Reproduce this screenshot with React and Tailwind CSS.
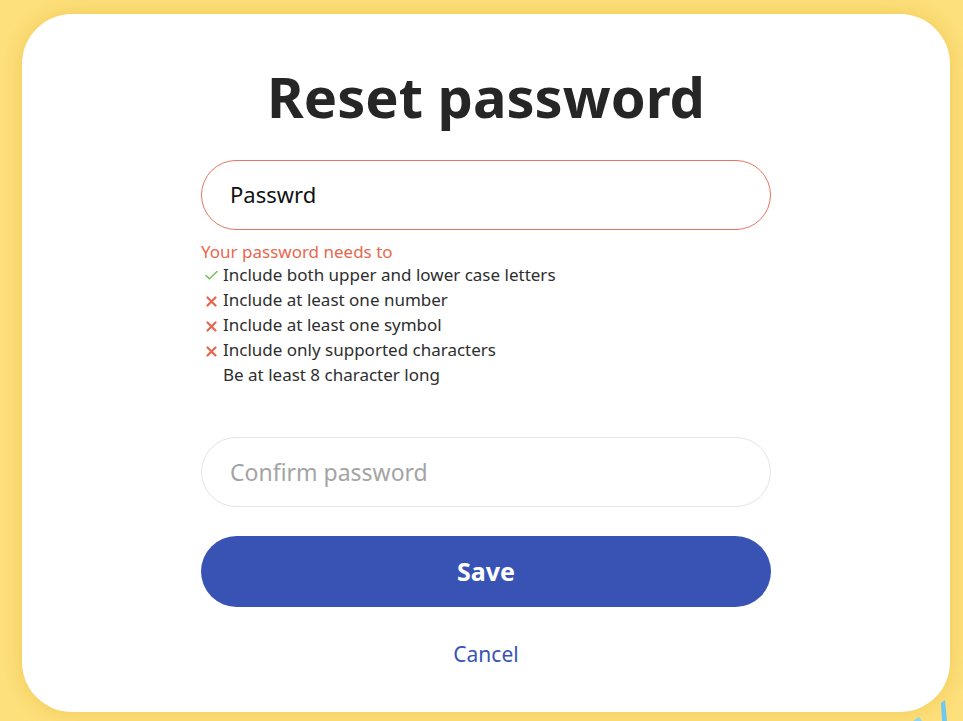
import { useState } from "react"

const RULES = [
  { text: "Include both upper and lower case letters", state: "ok" },
  { text: "Include at least one number", state: "fail" },
  { text: "Include at least one symbol", state: "fail" },
  { text: "Include only supported characters", state: "fail" },
  { text: "Be at least 8 character long", state: "none" },
]

function RuleIcon({ state }) {
  if (state === "ok") {
    return (
      <svg width="13" height="10" viewBox="0 0 13 10" className="mt-[3px]">
        <path d="M1 5.5 L4.5 8.8 L12 1.5" fill="none" stroke="#7dbf5c" strokeWidth="1.6" strokeLinecap="round" strokeLinejoin="round" />
      </svg>
    )
  }
  if (state === "fail") {
    return (
      <svg width="11" height="11" viewBox="0 0 11 11" className="mt-[4px]">
        <path d="M1.5 1.5 L9.5 9.5 M9.5 1.5 L1.5 9.5" fill="none" stroke="#e8664f" strokeWidth="2.2" strokeLinecap="round" />
      </svg>
    )
  }
  return null
}

export default function App() {
  const [password, setPassword] = useState("Passwrd")
  const [confirm, setConfirm] = useState("")

  return (
    <div className="relative w-[963px] h-[721px] overflow-hidden bg-[#fde07c] pt-[14px] pl-[22px] font-['Noto_Sans',sans-serif]">
      {/* Card */}
      <div className="w-[928px] h-[698px] bg-white rounded-[50px] shadow-[0_0_22px_rgba(214,160,20,0.35)] flex flex-col items-center pt-[46px]">
        <h1 className="text-[56px] leading-[72px] font-bold text-[#262626]">Reset password</h1>

        <div className="w-[570px] mt-[28px]">
          <input
            value={password}
            onChange={e => setPassword(e.target.value)}
            className="w-full h-[70px] rounded-full border-[1.5px] border-[#e8735f] px-[28px] pb-[3px] text-[22px] text-[#111] outline-none bg-white"
          />

          <p className="mt-[11px] text-[17px] leading-[21px] text-[#e8684f]">Your password needs to</p>
          <ul>
            {RULES.map(rule => (
              <li key={rule.text} className="flex items-start text-[17px] leading-[25px] text-[#2e2e2e]">
                <span className="w-[22px] flex justify-center pr-[2px] pt-[5px]">
                  <RuleIcon state={rule.state} />
                </span>
                <span>{rule.text}</span>
              </li>
            ))}
          </ul>

          <input
            value={confirm}
            onChange={e => setConfirm(e.target.value)}
            placeholder="Confirm password"
            className="mt-[50px] w-full h-[70px] rounded-full border-[1.5px] border-[#e4e4e4] px-[28px] text-[23px] text-black placeholder-[#a4a4a4] outline-none bg-white"
          />

          <button className="mt-[29px] w-full h-[71px] rounded-full bg-[#3953b5] text-white text-[25px] font-bold">
            Save
          </button>

          <div className="mt-[33px] text-center">
            <button className="text-[21px] leading-[28px] text-[#3953b5]">Cancel</button>
          </div>
        </div>
      </div>

      {/* Decoration peeking at bottom right */}
      <svg className="absolute right-[14px] bottom-0" width="40" height="24" viewBox="0 0 40 24">
        <path d="M32 6 L36 3 L38 24 L33 24 Z" fill="#6ec8f2" />
        <path d="M4 24 L10 20 L13 24 Z" fill="#8fd3f3" />
      </svg>
    </div>
  )
}
